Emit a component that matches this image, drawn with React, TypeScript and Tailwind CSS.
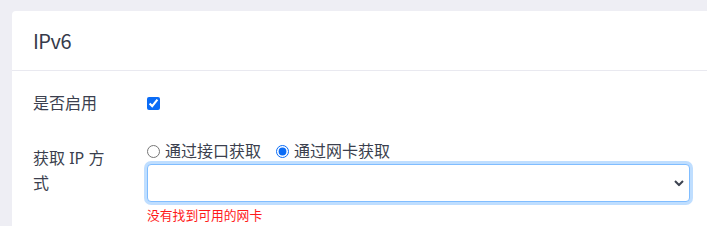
export default function App() {
  return (
    <div
      className="h-screen overflow-hidden bg-[#eeeef4] pt-[11px] pl-[12px]"
      style={{ fontFamily: '"Noto Sans", "Noto Sans CJK SC", sans-serif' }}
    >
      <div className="w-[720px] h-[260px] bg-white rounded-tl-[4px] text-[#3b3f4e]">
        {/* Header */}
        <div
          className="h-[60px] px-[21px] flex items-center border-b border-[#e9e9f0] text-[20px] tracking-[-0.5px] text-[#363a4a]"
          style={{ fontFamily: '"Noto Sans CJK SC", "Noto Sans", sans-serif' }}
        >
          IPv6
        </div>

        {/* Body */}
        <div className="px-[21px] pt-[20px] text-[16px]">
          <div className="flex items-center h-[24px] leading-[24px]">
            <div className="w-[114px]">是否启用</div>
            <input
              type="checkbox"
              defaultChecked
              className="m-0 w-[13px] h-[13px] accent-[#0b6cf6]"
            />
          </div>

          <div className="flex mt-[24px]">
            <label className="w-[114px] pr-[30px] pt-[7px] leading-[25px]">
              获取 IP 方式
            </label>
            <div>
              <div className="flex items-center h-[24px] leading-[24px]">
                <label className="flex items-center">
                  <input
                    type="radio"
                    name="ipmode"
                    className="m-0 w-[13px] h-[13px] accent-[#0b6cf6]"
                  />
                  <span className="ml-[5px]">通过接口获取</span>
                </label>
                <label className="flex items-center ml-[15px]">
                  <input
                    type="radio"
                    name="ipmode"
                    defaultChecked
                    className="m-0 w-[13px] h-[13px] accent-[#0b6cf6]"
                  />
                  <span className="ml-[5px]">通过网卡获取</span>
                </label>
              </div>
              <div className="relative mt-[1px] w-[543px]">
                <select className="appearance-none block w-full h-[38px] bg-white border border-[#80bdff] rounded-[4px] shadow-[0_0_0_3px_rgba(0,123,255,0.25)] outline-none px-[12px]">
                  <option value=""></option>
                </select>
                <svg
                  className="absolute right-[6px] top-1/2 -translate-y-1/2 pointer-events-none"
                  width="10"
                  height="7"
                  viewBox="0 0 10 7"
                  fill="none"
                >
                  <path d="M1 1.5 L5 5.5 L9 1.5" stroke="#3d4350" strokeWidth="2" />
                </svg>
              </div>
              <div className="mt-[4px] text-[12.8px] leading-[19px] text-[#ff1a1a]">
                没有找到可用的网卡
              </div>
            </div>
          </div>
        </div>
      </div>
    </div>
  );
}
